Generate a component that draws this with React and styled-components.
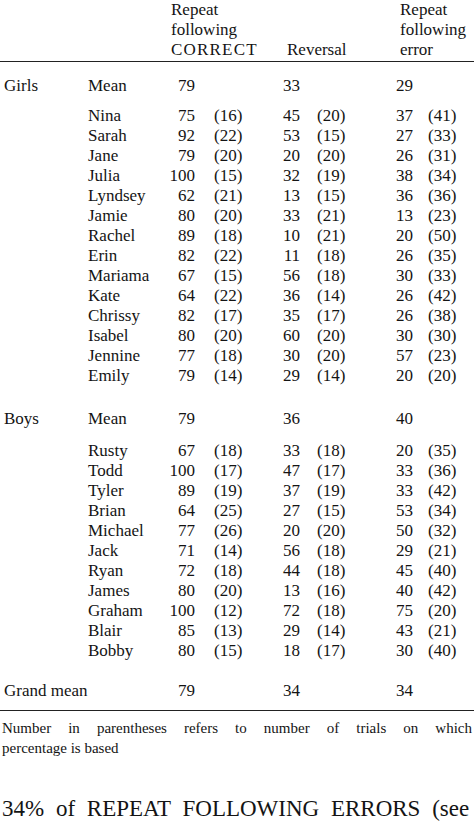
import React from "react";
import styled, { createGlobalStyle } from "styled-components";

const GlobalStyle = createGlobalStyle`
  html, body {
    margin: 0;
    padding: 0;
    background: #fff;
    overflow-x: hidden;
  }
  body {
    font-family: "Liberation Serif", "Times New Roman", serif;
    color: #141414;
  }
`;

const COLS = "84px 72px 35px 75px 30px 83px 30px 1fr";

const Page = styled.div`
  width: 474px;
  font-size: 17px;
`;

const Head = styled.div`
  display: grid;
  grid-template-columns: ${COLS};
  padding-left: 4px;
  line-height: 20px;
`;

const HeadCell = styled.div`
  grid-column: ${p => p.$col};
  padding-left: ${p => p.$indent}px;
  align-self: end;
`;

const Caps = styled.span`
  letter-spacing: 1.2px;
`;

const Rule = styled.div`
  border-top: 1.5px solid #222;
  margin-top: ${p => p.$space}px;
`;

const Row = styled.div`
  display: grid;
  grid-template-columns: ${COLS};
  padding-left: 4px;
  height: 20px;
  line-height: 20px;
  margin-top: ${p => p.$space || 0}px;
  white-space: nowrap;
`;

const Label = styled.div`
  grid-column: ${p => (p.$wide ? "1 / 3" : "auto")};
`;

const Num = styled.div`
  text-align: right;
`;

const Paren = styled.div`
  padding-left: ${p => p.$indent}px;
`;

const Note = styled.p`
  margin: 7px 0 0;
  padding: 0 2px;
  font-size: 15px;
  line-height: 20px;
`;

const Justified = styled.span`
  display: block;
  text-align: justify;
  text-align-last: justify;
`;

const Lead = styled.p`
  margin: 36px 0 0;
  padding-left: 2px;
  font-size: 23px;
  line-height: 30px;
  word-spacing: 6px;
  white-space: nowrap;
`;

const girls = [
  ["Nina", 75, 16, 45, 20, 37, 41],
  ["Sarah", 92, 22, 53, 15, 27, 33],
  ["Jane", 79, 20, 20, 20, 26, 31],
  ["Julia", 100, 15, 32, 19, 38, 34],
  ["Lyndsey", 62, 21, 13, 15, 36, 36],
  ["Jamie", 80, 20, 33, 21, 13, 23],
  ["Rachel", 89, 18, 10, 21, 20, 50],
  ["Erin", 82, 22, 11, 18, 26, 35],
  ["Mariama", 67, 15, 56, 18, 30, 33],
  ["Kate", 64, 22, 36, 14, 26, 42],
  ["Chrissy", 82, 17, 35, 17, 26, 38],
  ["Isabel", 80, 20, 60, 20, 30, 30],
  ["Jennine", 77, 18, 30, 20, 57, 23],
  ["Emily", 79, 14, 29, 14, 20, 20]
];

const boys = [
  ["Rusty", 67, 18, 33, 18, 20, 35],
  ["Todd", 100, 17, 47, 17, 33, 36],
  ["Tyler", 89, 19, 37, 19, 33, 42],
  ["Brian", 64, 25, 27, 15, 53, 34],
  ["Michael", 77, 26, 20, 20, 50, 32],
  ["Jack", 71, 14, 56, 18, 29, 21],
  ["Ryan", 72, 18, 44, 18, 45, 40],
  ["James", 80, 20, 13, 16, 40, 42],
  ["Graham", 100, 12, 72, 18, 75, 20],
  ["Blair", 85, 13, 29, 14, 43, 21],
  ["Bobby", 80, 15, 18, 17, 30, 40]
];

const ChildRow = ({ row, space }) => {
  const [name, a, an, b, bn, c, cn] = row;
  return (
    <Row $space={space}>
      <Label />
      <Label>{name}</Label>
      <Num>{a}</Num>
      <Paren $indent={19}>({an})</Paren>
      <Num>{b}</Num>
      <Paren $indent={17}>({bn})</Paren>
      <Num>{c}</Num>
      <Paren $indent={15}>({cn})</Paren>
    </Row>
  );
};

const MeanRow = ({ group, values, space }) => (
  <Row $space={space}>
    <Label>{group}</Label>
    <Label>Mean</Label>
    <Num>{values[0]}</Num>
    <Paren />
    <Num>{values[1]}</Num>
    <Paren />
    <Num>{values[2]}</Num>
  </Row>
);

export default function App() {
  return (
    <Page>
      <GlobalStyle />
      <Head>
        <HeadCell $col="3 / 5" $indent={11}>
          Repeat
          <br />
          following
          <br />
          <Caps>CORRECT</Caps>
        </HeadCell>
        <HeadCell $col="5 / 7" $indent={17}>
          Reversal
        </HeadCell>
        <HeadCell $col="7 / 9" $indent={17}>
          Repeat
          <br />
          following
          <br />
          error
        </HeadCell>
      </Head>
      <Rule $space={1} />

      <MeanRow group="Girls" values={[79, 33, 29]} space={14} />
      {girls.map((row, i) => (
        <ChildRow key={row[0]} row={row} space={i === 0 ? 10 : 0} />
      ))}

      <MeanRow group="Boys" values={[79, 36, 40]} space={23} />
      {boys.map((row, i) => (
        <ChildRow key={row[0]} row={row} space={i === 0 ? 12 : 0} />
      ))}

      <Row $space={20}>
        <Label $wide>Grand mean</Label>
        <Num>79</Num>
        <Paren />
        <Num>34</Num>
        <Paren />
        <Num>34</Num>
      </Row>
      <Rule $space={9} />

      <Note>
        <Justified>Number in parentheses refers to number of trials on which</Justified>
        percentage is based
      </Note>

      <Lead>34% of REPEAT FOLLOWING ERRORS (see</Lead>
    </Page>
  );
}
